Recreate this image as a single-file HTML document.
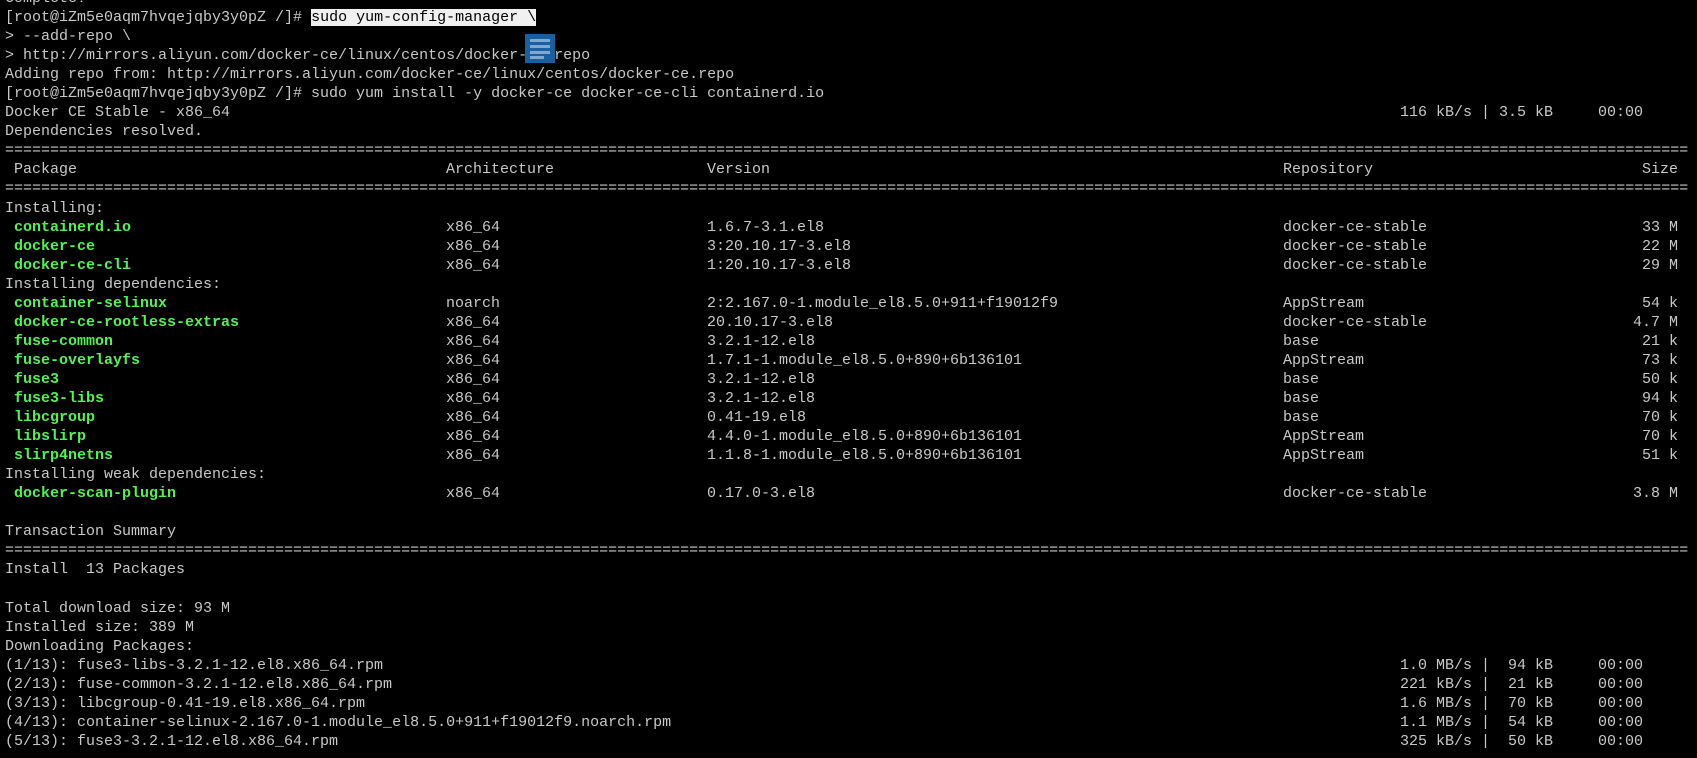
<!DOCTYPE html>
<html><head><meta charset="utf-8"><style>
html,body{margin:0;padding:0;background:#000;width:1697px;height:758px;overflow:hidden}
#t{position:absolute;left:5px;top:-11px;font-family:"Liberation Mono",monospace;font-size:15px;color:#c8c8c8}
.l{position:relative;height:19.05px;line-height:19.05px;white-space:pre;width:1690px}
.l span{position:absolute;top:0}
.g{color:#55f055;font-weight:bold}
.a{left:441px}.v{left:702px}.r{left:1278px}.s{right:17px;text-align:right}
.d{left:1395px}
.hl{background:#f0f0f0;color:#000}
#ic{position:absolute;left:525px;top:34px;width:30px;height:29px;background:#1a5f9e}
#ic i{position:absolute;left:5px;height:3px;background:#7fa8d3;width:20px}
</style></head><body>
<div id="t">
<div class="l">Complete!</div>
<div class="l">[root@iZm5e0aqm7hvqejqby3y0pZ /]# <b class="hl" style="font-weight:normal">sudo yum-config-manager \</b></div>
<div class="l">&gt; --add-repo \</div>
<div class="l">&gt; http://mirrors.aliyun.com/docker-ce/linux/centos/docker-ce.repo</div>
<div class="l">Adding repo from: http://mirrors.aliyun.com/docker-ce/linux/centos/docker-ce.repo</div>
<div class="l">[root@iZm5e0aqm7hvqejqby3y0pZ /]# sudo yum install -y docker-ce docker-ce-cli containerd.io</div>
<div class="l">Docker CE Stable - x86_64<span class="d">116 kB/s | 3.5 kB     00:00</span></div>
<div class="l">Dependencies resolved.</div>
<div class="l">===========================================================================================================================================================================================</div>
<div class="l"> Package<span class="a">Architecture</span><span class="v">Version</span><span class="r">Repository</span><span class="s">Size</span></div>
<div class="l">===========================================================================================================================================================================================</div>
<div class="l">Installing:</div>
<div class="l"> <b class="g">containerd.io</b><span class="a">x86_64</span><span class="v">1.6.7-3.1.el8</span><span class="r">docker-ce-stable</span><span class="s">33 M</span></div>
<div class="l"> <b class="g">docker-ce</b><span class="a">x86_64</span><span class="v">3:20.10.17-3.el8</span><span class="r">docker-ce-stable</span><span class="s">22 M</span></div>
<div class="l"> <b class="g">docker-ce-cli</b><span class="a">x86_64</span><span class="v">1:20.10.17-3.el8</span><span class="r">docker-ce-stable</span><span class="s">29 M</span></div>
<div class="l">Installing dependencies:</div>
<div class="l"> <b class="g">container-selinux</b><span class="a">noarch</span><span class="v">2:2.167.0-1.module_el8.5.0+911+f19012f9</span><span class="r">AppStream</span><span class="s">54 k</span></div>
<div class="l"> <b class="g">docker-ce-rootless-extras</b><span class="a">x86_64</span><span class="v">20.10.17-3.el8</span><span class="r">docker-ce-stable</span><span class="s">4.7 M</span></div>
<div class="l"> <b class="g">fuse-common</b><span class="a">x86_64</span><span class="v">3.2.1-12.el8</span><span class="r">base</span><span class="s">21 k</span></div>
<div class="l"> <b class="g">fuse-overlayfs</b><span class="a">x86_64</span><span class="v">1.7.1-1.module_el8.5.0+890+6b136101</span><span class="r">AppStream</span><span class="s">73 k</span></div>
<div class="l"> <b class="g">fuse3</b><span class="a">x86_64</span><span class="v">3.2.1-12.el8</span><span class="r">base</span><span class="s">50 k</span></div>
<div class="l"> <b class="g">fuse3-libs</b><span class="a">x86_64</span><span class="v">3.2.1-12.el8</span><span class="r">base</span><span class="s">94 k</span></div>
<div class="l"> <b class="g">libcgroup</b><span class="a">x86_64</span><span class="v">0.41-19.el8</span><span class="r">base</span><span class="s">70 k</span></div>
<div class="l"> <b class="g">libslirp</b><span class="a">x86_64</span><span class="v">4.4.0-1.module_el8.5.0+890+6b136101</span><span class="r">AppStream</span><span class="s">70 k</span></div>
<div class="l"> <b class="g">slirp4netns</b><span class="a">x86_64</span><span class="v">1.1.8-1.module_el8.5.0+890+6b136101</span><span class="r">AppStream</span><span class="s">51 k</span></div>
<div class="l">Installing weak dependencies:</div>
<div class="l"> <b class="g">docker-scan-plugin</b><span class="a">x86_64</span><span class="v">0.17.0-3.el8</span><span class="r">docker-ce-stable</span><span class="s">3.8 M</span></div>
<div class="l"> </div>
<div class="l">Transaction Summary</div>
<div class="l">===========================================================================================================================================================================================</div>
<div class="l">Install  13 Packages</div>
<div class="l"> </div>
<div class="l">Total download size: 93 M</div>
<div class="l">Installed size: 389 M</div>
<div class="l">Downloading Packages:</div>
<div class="l">(1/13): fuse3-libs-3.2.1-12.el8.x86_64.rpm<span class="d">1.0 MB/s |  94 kB     00:00</span></div>
<div class="l">(2/13): fuse-common-3.2.1-12.el8.x86_64.rpm<span class="d">221 kB/s |  21 kB     00:00</span></div>
<div class="l">(3/13): libcgroup-0.41-19.el8.x86_64.rpm<span class="d">1.6 MB/s |  70 kB     00:00</span></div>
<div class="l">(4/13): container-selinux-2.167.0-1.module_el8.5.0+911+f19012f9.noarch.rpm<span class="d">1.1 MB/s |  54 kB     00:00</span></div>
<div class="l">(5/13): fuse3-3.2.1-12.el8.x86_64.rpm<span class="d">325 kB/s |  50 kB     00:00</span></div>
</div>
<div id="ic"><i style="top:5px"></i><i style="top:11px"></i><i style="top:17px"></i><i style="top:22px;width:14px"></i></div>
</body></html>
